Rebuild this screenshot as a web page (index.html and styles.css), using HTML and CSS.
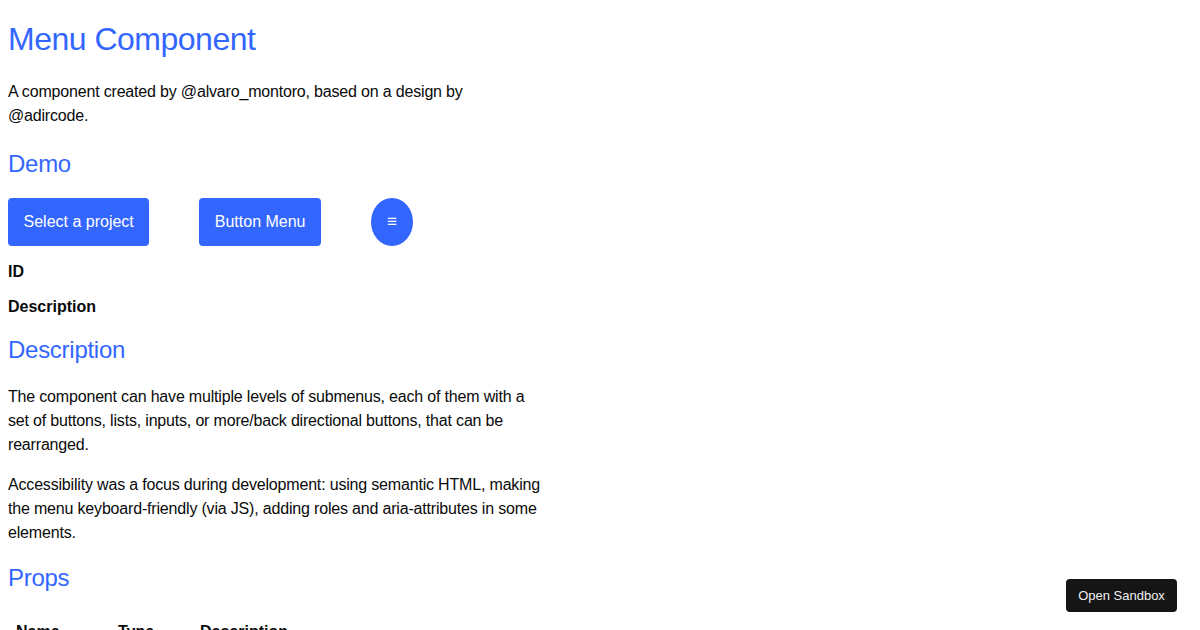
FILE: index.html
```html
<!DOCTYPE html>
<html lang="en">
<head>
<meta charset="utf-8">
<title>Menu Component</title>
<link rel="stylesheet" href="styles.css">
</head>
<body>
<main class="page">
  <h1 class="title">Menu Component</h1>
  <p class="text">A component created by @alvaro_montoro, based on a design by @adircode.</p>

  <h2 class="section">Demo</h2>
  <div class="demo">
    <button class="btn" type="button">Select a project</button>
    <button class="btn" type="button">Button Menu</button>
    <button class="btn btn-round" type="button" aria-label="Menu">≡</button>
  </div>
  <div class="label label-id">ID</div>
  <div class="label label-desc">Description</div>

  <h2 class="section section-desc">Description</h2>
  <p class="text">The component can have multiple levels of submenus, each of them with a set of buttons, lists, inputs, or more/back directional buttons, that can be rearranged.</p>
  <p class="text">Accessibility was a focus during development: using semantic HTML, making the menu keyboard-friendly (via JS), adding roles and aria-attributes in some elements.</p>

  <h2 class="section section-props">Props</h2>
  <table class="props">
    <thead>
      <tr>
        <th class="col-name">Name</th>
        <th class="col-type">Type</th>
        <th class="col-desc">Description</th>
      </tr>
    </thead>
  </table>
</main>
<button class="sandbox" type="button">Open Sandbox</button>
</body>
</html>
```

FILE: styles.css
```css
html, body {
  margin: 0;
  padding: 0;
  background: #ffffff;
}

body {
  font-family: "Liberation Sans", Arial, sans-serif;
  font-size: 16px;
  color: #0a0a0a;
  letter-spacing: -0.18px;
  overflow: hidden;
}

.page {
  padding: 0 8px;
  max-width: 536px;
}

.title {
  font-size: 32px;
  font-weight: 400;
  line-height: 37px;
  letter-spacing: -0.5px;
  color: #3366ff;
  margin: 21px 0 22px;
}

.text {
  line-height: 24px;
  margin: 0 0 16px;
}

.section {
  font-size: 24px;
  font-weight: 400;
  line-height: 30px;
  letter-spacing: -0.27px;
  color: #3366ff;
  margin: 21px 0 19px;
}

.section-desc {
  margin-top: 19px;
  margin-bottom: 20px;
}

.section-props {
  margin-top: 18px;
}

.demo {
  display: flex;
  gap: 50px;
  align-items: flex-start;
}

.btn {
  font-family: "Liberation Sans", Arial, sans-serif;
  font-size: 16px;
  line-height: 24px;
  letter-spacing: 0;
  color: #ffffff;
  background: #3366ff;
  border: 0;
  border-radius: 4px;
  padding: 12px 15.5px;
  margin: 0;
  white-space: nowrap;
}

.btn-round {
  border-radius: 50%;
  width: 42px;
  padding: 12px 0;
  font-size: 17px;
  font-weight: 700;
}

.label {
  font-weight: 700;
  line-height: 18px;
  letter-spacing: 0;
}

.label-id {
  margin-top: 17px;
}

.label-desc {
  margin-top: 17px;
}

.props {
  border-collapse: collapse;
  margin-top: 15px;
}

.props th {
  text-align: left;
  font-weight: 700;
  line-height: 24px;
  letter-spacing: 0;
  padding: 8px;
}

.col-name { width: 86px; }
.col-type { width: 66px; }
.col-desc { width: 300px; }

.sandbox {
  position: fixed;
  right: 23px;
  bottom: 18px;
  background: #151515;
  color: #f0f0f0;
  border: 0;
  border-radius: 4px;
  font-family: "Liberation Sans", Arial, sans-serif;
  font-size: 13px;
  line-height: 17px;
  letter-spacing: 0;
  padding: 8px 12px;
  width: 111px;
}
```
